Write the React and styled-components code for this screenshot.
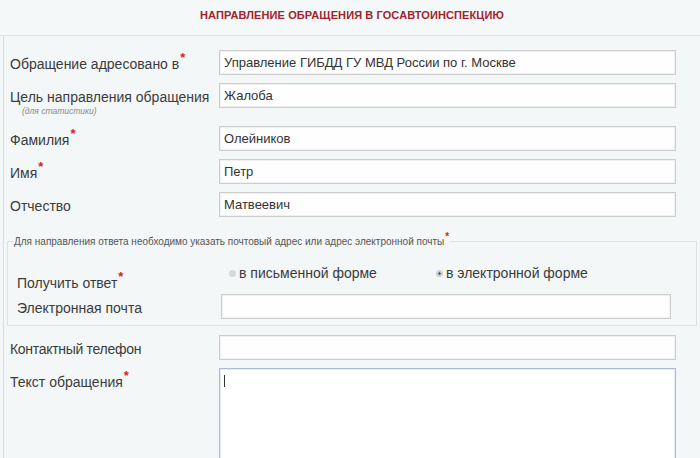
import React from 'react';
import styled, { createGlobalStyle } from 'styled-components';

const GlobalStyle = createGlobalStyle`
  html, body {
    margin: 0;
    padding: 0;
    background: #f3f7f8;
    font-family: "Liberation Sans", Arial, sans-serif;
    overflow: hidden;
  }
`;

const rows = [
  { label: 'Обращение адресовано в', required: true, value: 'Управление ГИБДД ГУ МВД России по г. Москве' },
  { label: 'Цель направления обращения', hint: '(для статистики)', value: 'Жалоба' },
  { label: 'Фамилия', required: true, value: 'Олейников' },
  { label: 'Имя', required: true, value: 'Петр' },
  { label: 'Отчество', value: 'Матвеевич' },
];

const App = () => {
  return (
    <Page>
      <GlobalStyle />
      <Header>
        <Title>Направление обращения в Госавтоинспекцию</Title>
      </Header>
      <Panel>
        <Rows>
          {rows.map((row) => (
            <Row key={row.label}>
              <Label>
                {row.label}
                {row.required && <Star>*</Star>}
                {row.hint && <Hint>{row.hint}</Hint>}
              </Label>
              <Input defaultValue={row.value} />
            </Row>
          ))}
        </Rows>

        <Fieldset>
          <Legend>
            Для направления ответа необходимо указать почтовый адрес или адрес электронной почты
            <Star $small>*</Star>
          </Legend>
          <InnerRow>
            <Label $lower>
              Получить ответ<Star>*</Star>
            </Label>
            <Radios>
              <RadioOption $width={207}>
                <RadioDot />в письменной форме
              </RadioOption>
              <RadioOption>
                <RadioDot $checked />в электронной форме
              </RadioOption>
            </Radios>
          </InnerRow>
          <InnerRow>
            <Label>Электронная почта</Label>
            <Input />
          </InnerRow>
        </Fieldset>

        <Rows>
          <Row>
            <Label $narrow>Контактный телефон</Label>
            <Input />
          </Row>
          <Row>
            <Label>
              Текст обращения<Star>*</Star>
            </Label>
            <TextBox>
              <Caret />
            </TextBox>
          </Row>
        </Rows>
      </Panel>
    </Page>
  );
};

export default App;

const Page = styled.div`
  width: 700px;
  height: 458px;
  overflow: hidden;
`;

const Header = styled.div`
  box-sizing: border-box;
  height: 36px;
  padding-bottom: 6px;
  display: flex;
  align-items: center;
  justify-content: center;
  border-bottom: 1px solid #dde4e6;
  background: #f5f8f9;
`;

const Title = styled.h1`
  margin: 0;
  padding-left: 4px;
  font-size: 11px;
  font-weight: bold;
  text-transform: uppercase;
  letter-spacing: 0.1px;
  color: #a1242c;
`;

const Panel = styled.div`
  margin-left: 3px;
  border-left: 1px solid #d6dee1;
  padding-top: 14px;
  min-height: 420px;
`;

const Rows = styled.div`
  display: flex;
  flex-direction: column;
  gap: 8px;
  padding: 0 6px;
`;

const Row = styled.div`
  display: grid;
  grid-template-columns: 209px 457px;
  align-items: start;
`;

const Label = styled.div`
  padding-top: ${(p) => (p.$lower ? '13px' : '5px')};
  margin-bottom: ${(p) => (p.$lower ? '-9px' : '0')};
  font-size: 14px;
  line-height: 18px;
  letter-spacing: ${(p) => (p.$narrow ? '-0.3px' : '0')};
  color: #3b3b3b;
`;

const Star = styled.span`
  display: inline-block;
  vertical-align: top;
  margin-top: ${(p) => (p.$small ? '-6px' : '-4px')};
  margin-left: 1px;
  font-size: ${(p) => (p.$small ? '10px' : '13px')};
  font-weight: bold;
  line-height: 14px;
  color: #d5232a;
`;

const Hint = styled.span`
  display: block;
  margin: 0 0 1px 12px;
  font-size: 8.5px;
  line-height: 11px;
  font-style: italic;
  color: #8a8a8a;
`;

const Input = styled.input`
  box-sizing: border-box;
  width: 100%;
  height: 25px;
  padding: 0 4px;
  border: 1px solid #cdcdcd;
  border-radius: 0;
  background: #fefefe;
  box-shadow: inset 0 0 0 1px #f0f0f0;
  font-family: "Liberation Sans", Arial, sans-serif;
  font-size: 13px;
  color: #333;
  outline: none;
`;

const TextBox = styled.div`
  box-sizing: border-box;
  height: 110px;
  padding: 6px 4px;
  border: 1px solid #a8bcd6;
  background: #ffffff;
  box-shadow: inset 0 0 0 1px #e4ecf5;
`;

const Caret = styled.div`
  width: 1px;
  height: 12px;
  background: #333;
`;

const Fieldset = styled.fieldset`
  margin: 19px 3px 9px 3px;
  padding: 14px 25px 6px 9px;
  border: 1px solid #dbe2e5;
  display: flex;
  flex-direction: column;
  gap: 9px;
`;

const Legend = styled.legend`
  margin-left: -4px;
  padding: 0 1px;
  font-size: 10px;
  line-height: 11px;
  color: #555;
`;

const InnerRow = styled.div`
  display: grid;
  grid-template-columns: 204px 450px;
  align-items: start;
`;

const Radios = styled.div`
  display: flex;
  align-items: center;
  height: 24px;
  padding-left: 8px;
`;

const RadioOption = styled.label`
  display: flex;
  align-items: center;
  width: ${(p) => (p.$width ? `${p.$width}px` : 'auto')};
  font-size: 14px;
  color: #3b3b3b;
`;

const RadioDot = styled.span`
  box-sizing: border-box;
  width: 7px;
  height: 7px;
  margin-right: 3px;
  border-radius: 50%;
  background: ${(p) => (p.$checked ? '#fff' : '#d4d9dc')};
  border: ${(p) => (p.$checked ? '2px solid #c9cfd2' : 'none')};
  box-shadow: ${(p) => (p.$checked ? 'inset 0 0 0 2px #555' : 'none')};
`;
